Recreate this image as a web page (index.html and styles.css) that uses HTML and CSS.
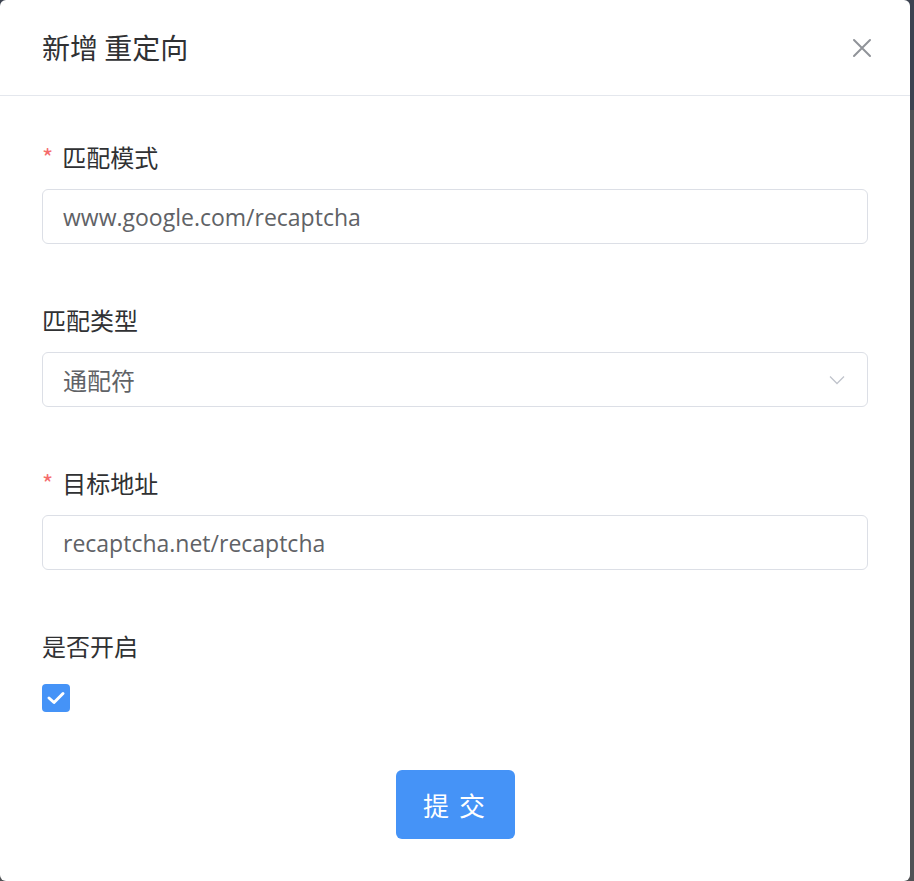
FILE: index.html
```html
<!DOCTYPE html>
<html lang="zh-CN">
<head>
<meta charset="utf-8">
<title>新增 重定向</title>
<link rel="stylesheet" href="styles.css">
</head>
<body>
<div class="page">
  <div class="dialog">
    <div class="dialog-header">
      <span class="dialog-title">新增 重定向</span>
      <button class="close" aria-label="关闭">
        <svg width="20" height="20" viewBox="0 0 20 20"><path d="M2 2 L18 18 M18 2 L2 18" stroke="#909399" stroke-width="2" fill="none" stroke-linecap="round"/></svg>
      </button>
    </div>
    <div class="dialog-body">
      <div class="form-item">
        <label class="label required">匹配模式</label>
        <div class="input">www.google.com/recaptcha</div>
      </div>
      <div class="form-item">
        <label class="label">匹配类型</label>
        <div class="input select">
          <span>通配符</span>
          <svg class="chev" width="16" height="10" viewBox="0 0 16 10"><path d="M1 1.5 L8 8.5 L15 1.5" stroke="#c0c4cc" stroke-width="1.3" fill="none"/></svg>
        </div>
      </div>
      <div class="form-item">
        <label class="label required">目标地址</label>
        <div class="input">recaptcha.net/recaptcha</div>
      </div>
      <div class="form-item form-item-last">
        <label class="label">是否开启</label>
        <div class="check-row">
          <span class="checkbox">
            <svg width="20" height="16" viewBox="0 0 20 16"><path d="M3 8 L8 12.5 L17 3.5" stroke="#fff" stroke-width="3" fill="none" stroke-linecap="round" stroke-linejoin="round"/></svg>
          </span>
        </div>
      </div>
      <div class="actions">
        <button class="submit">提 交</button>
      </div>
    </div>
  </div>
  <div class="backdrop-strip"></div>
</div>
</body>
</html>
```
FILE: styles.css
```css
html, body {
  margin: 0;
  padding: 0;
  height: 100%;
}
body {
  background: #50535a;
  font-family: "Open Sans", "Noto Sans CJK SC", sans-serif;
  overflow: hidden;
}
.page {
  display: flex;
  height: 881px;
  background: linear-gradient(to bottom, #3c4350 0, #3c4350 110px, #505255 110px, #505255 100%);
}
.dialog {
  width: 910px;
  height: 881px;
  background: #fff;
  border-radius: 6px;
  flex: none;
}
.backdrop-strip {
  flex: 1;
}
.dialog-header {
  height: 95px;
  border-bottom: 1px solid #e4e7ed;
  display: flex;
  align-items: center;
  justify-content: space-between;
  padding: 0 38px 0 42px;
}
.dialog-title {
  font-family: "Noto Sans CJK SC", sans-serif;
  font-size: 28px;
  color: #303133;
  line-height: 1;
  padding-bottom: 2px;
}
.close {
  border: 0;
  background: none;
  padding: 0;
  width: 20px;
  height: 20px;
  display: flex;
}
.dialog-body {
  padding: 40px 42px 0 42px;
}
.form-item {
  margin-bottom: 55px;
}
.form-item-last {
  margin-bottom: 0;
}
.label {
  display: block;
  height: 44px;
  line-height: 42px;
  font-family: "Noto Sans CJK SC", sans-serif;
  font-size: 24px;
  color: #303133;
  margin-bottom: 9px;
}
.label.required::before {
  content: "*";
  color: #f56c6c;
  margin-right: 9px;
  font-size: 24px;
}
.input {
  height: 55px;
  box-sizing: border-box;
  border: 1px solid #dcdfe6;
  border-radius: 6px;
  padding: 0 20px;
  display: flex;
  align-items: center;
  font-size: 23px;
  color: #606266;
}
.select {
  justify-content: space-between;
  font-family: "Noto Sans CJK SC", sans-serif;
  font-size: 24px;
}
.select .chev {
  margin-right: 2px;
}
.check-row {
  height: 40px;
  display: flex;
  align-items: center;
}
.checkbox {
  width: 28px;
  height: 28px;
  border-radius: 4px;
  background: #4593f7;
  display: flex;
  align-items: center;
  justify-content: center;
}
.actions {
  display: flex;
  justify-content: center;
  padding-top: 52px;
}
.submit {
  width: 119px;
  height: 69px;
  border: 0;
  border-radius: 6px;
  background: #4593f7;
  color: #fff;
  font-family: "Noto Sans CJK SC", sans-serif;
  font-size: 26px;
  letter-spacing: 2px;
  padding: 0;
}
```
